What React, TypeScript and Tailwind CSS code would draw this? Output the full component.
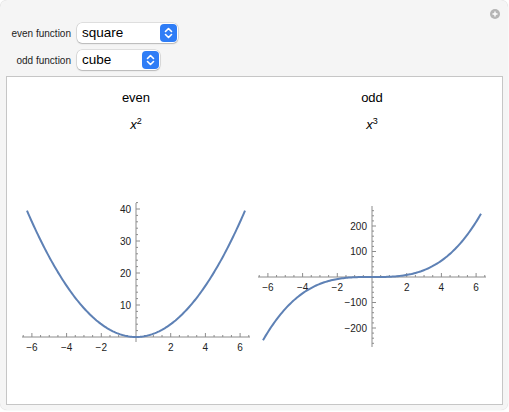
import React from 'react';

const FONT = { fontFamily: '"Liberation Sans", Arial, sans-serif' };
const CURVE = '#5e81b5';
const AXIS = '#8c8c8c';

const TWO_PI = Math.PI * 2;
const SX = 17.35; // px per x unit, both plots

function curvePath(f: (x: number) => number, cx: number, cy: number, sy: number) {
  const pts: string[] = [];
  const n = 160;
  for (let i = 0; i <= n; i++) {
    const x = -TWO_PI + (2 * TWO_PI * i) / n;
    pts.push(`${(cx + x * SX).toFixed(2)},${(cy - f(x) * sy).toFixed(2)}`);
  }
  return 'M' + pts.join('L');
}

type PlotProps = {
  f: (x: number) => number;
  cy: number;
  sy: number;
  yTop: number;
  yBottom: number;
  yMajor: number[];
  yMinorStep: number;
  yMin: number;
  yMax: number;
};

function Plot({ f, cy, sy, yTop, yBottom, yMajor, yMinorStep, yMin, yMax }: PlotProps) {
  const cx = 118;
  const xMinor: number[] = [];
  for (let v = -6.5; v <= 6.5; v += 0.5) if (Math.abs(v % 2) > 0.01 && Math.abs(v) > 0.01) xMinor.push(v);
  const yMinor: number[] = [];
  for (let v = yMin; v <= yMax; v += yMinorStep) if (!yMajor.includes(v) && v !== 0) yMinor.push(v);

  return (
    <svg width={236} height={165} viewBox="0 0 236 165" className="block" style={FONT}>
      {/* axes */}
      <line x1={4} y1={cy} x2={232} y2={cy} stroke={AXIS} strokeWidth={1} />
      <line x1={cx} y1={yTop} x2={cx} y2={yBottom} stroke={AXIS} strokeWidth={1} />
      {/* x ticks */}
      {[-6, -4, -2, 2, 4, 6].map((v) => (
        <g key={v}>
          <line x1={cx + v * SX} y1={cy} x2={cx + v * SX} y2={cy - 4} stroke={AXIS} />
          <text x={cx + v * SX} y={cy + 14} fontSize={10} textAnchor="middle" fill="#222">
            {v < 0 ? `−${-v}` : v}
          </text>
        </g>
      ))}
      {xMinor.map((v) => (
        <line key={v} x1={cx + v * SX} y1={cy} x2={cx + v * SX} y2={cy - 2} stroke={AXIS} />
      ))}
      {/* y ticks */}
      {yMajor.map((v) => (
        <g key={v}>
          <line x1={cx} y1={cy - v * sy} x2={cx + 4} y2={cy - v * sy} stroke={AXIS} />
          <text x={cx - 5} y={cy - v * sy + 3.5} fontSize={10} textAnchor="end" fill="#222">
            {v < 0 ? `−${-v}` : v}
          </text>
        </g>
      ))}
      {yMinor.map((v) => (
        <line key={v} x1={cx} y1={cy - v * sy} x2={cx + 2} y2={cy - v * sy} stroke={AXIS} />
      ))}
      <path d={curvePath(f, cx, cy, sy)} fill="none" stroke={CURVE} strokeWidth={2} strokeLinejoin="round" />
    </svg>
  );
}

function Chevrons() {
  return (
    <svg width="9" height="12" viewBox="0 0 9 12" fill="none" stroke="white" strokeWidth="1.6" strokeLinecap="round" strokeLinejoin="round">
      <path d="M1.5 4.5L4.5 1.5L7.5 4.5" />
      <path d="M1.5 7.5L4.5 10.5L7.5 7.5" />
    </svg>
  );
}

function Select({ value, width }: { value: string; width: string }) {
  return (
    <div
      className={`${width} h-[20px] bg-white rounded-[5px] flex items-center justify-between pl-[5px] pr-[1px] shadow-[0_0_0_0.5px_rgba(0,0,0,0.18),0_1px_1.5px_rgba(0,0,0,0.18)]`}
    >
      <span className="text-[13.5px] text-black leading-none">{value}</span>
      <div className="w-[17px] h-[18px] rounded-[4px] bg-[#2f7df6] flex items-center justify-center">
        <Chevrons />
      </div>
    </div>
  );
}

function Column({ title, expo, children }: { title: string; expo: string; children: React.ReactNode }) {
  return (
    <div className="w-[236px] flex flex-col items-center">
      <div className="pt-[13px] text-[13px] leading-[16px] text-black">{title}</div>
      <div className="mt-[11px] text-[13px] leading-[16px] text-black whitespace-nowrap">
        <span className="italic">x</span>
        <span className="text-[9px] relative -top-[5px]">{expo}</span>
      </div>
      <div className="mt-[62px]">{children}</div>
    </div>
  );
}

export default function App() {
  return (
    <div className="w-[509px] h-[412px] bg-white overflow-hidden" style={FONT}>
      <div className="relative w-[508px] h-[410px] bg-[#f5f5f5] rounded-[7px] shadow-[0_0_1px_rgba(0,0,0,0.25)] pt-[23px]">
        {/* plus button */}
        <div className="absolute right-[8px] top-[9px] w-[10px] h-[10px] rounded-full bg-[#b5b5b5] flex items-center justify-center">
          <svg width="6" height="6" viewBox="0 0 6 6" stroke="white" strokeWidth="1.4">
            <path d="M3 0.5V5.5M0.5 3H5.5" />
          </svg>
        </div>

        <div className="flex flex-col gap-[7px] pl-[6px]">
          <div className="flex items-center">
            <div className="w-[71px] pr-[6px] text-right text-[10px] text-[#222] whitespace-nowrap">even function</div>
            <Select value="square" width="w-[101px]" />
          </div>
          <div className="flex items-center">
            <div className="w-[71px] pr-[6px] text-right text-[10px] text-[#222] whitespace-nowrap">odd function</div>
            <Select value="cube" width="w-[83px]" />
          </div>
        </div>

        <div className="ml-[6px] mt-[6px] w-[497px] h-[329px] bg-white border border-[#c6c6c6] flex pl-[11px]">
          <Column title="even" expo="2">
            <Plot
              f={(x) => x * x}
              cy={141}
              sy={3.2}
              yTop={7}
              yBottom={146}
              yMajor={[10, 20, 30, 40]}
              yMinorStep={2}
              yMin={0}
              yMax={42}
            />
          </Column>
          <Column title="odd" expo="3">
            <Plot
              f={(x) => x * x * x}
              cy={81}
              sy={0.255}
              yTop={10}
              yBottom={151}
              yMajor={[-200, -100, 100, 200]}
              yMinorStep={20}
              yMin={-260}
              yMax={260}
            />
          </Column>
        </div>
      </div>
    </div>
  );
}
